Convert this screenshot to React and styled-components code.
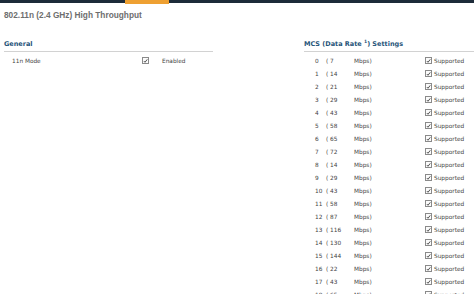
import React from "react";
import styled, { createGlobalStyle } from "styled-components";

const GlobalStyle = createGlobalStyle`
html, body {
  margin: 0;
  padding: 0;
  background: #ffffff;
  overflow: hidden;
}
body {
  font-family: "DejaVu Sans", Verdana, sans-serif;
}
`;

const rates = [7, 14, 21, 29, 43, 58, 65, 72, 14, 29, 43, 58, 87, 116, 130, 144, 22, 43, 65];

const Check = () => (
    <svg width="7" height="7" viewBox="0 0 7 7">
        <path d="M1.2 3.6 L2.8 5.3 L6 1.2" fill="none" stroke="#222" strokeWidth="1.1" />
    </svg>
);

const App = () => {
    return (
        <Page>
            <GlobalStyle />
            <TopBar>
                <Tab />
            </TopBar>
            <Title>802.11n (2.4 GHz) High Throughput</Title>
            <Columns>
                <LeftCol>
                    <Heading>General</Heading>
                    <ModeRow>
                        <ModeLabel>11n Mode</ModeLabel>
                        <Box><Check /></Box>
                        <ModeValue>Enabled</ModeValue>
                    </ModeRow>
                </LeftCol>
                <RightCol>
                    <Heading>
                        MCS (Data Rate <Sup>1</Sup>) Settings
                    </Heading>
                    {rates.map((rate, idx) => {
                        return (
                            <McsRow key={idx}>
                                <Index>{idx}</Index>
                                <Rate>( {rate}</Rate>
                                <Unit>Mbps)</Unit>
                                <Box><Check /></Box>
                                <Supported>Supported</Supported>
                            </McsRow>
                        )
                    })}
                </RightCol>
            </Columns>
        </Page>
    )
}

const Page = styled.div`
width: 474px;
height: 294px;
overflow: hidden;
background: #ffffff;
`;

const TopBar = styled.div`
display: flex;
align-items: flex-start;
height: 3px;
background-color: #1d2b39;
`;

const Tab = styled.div`
margin-left: 125px;
width: 44px;
height: 4px;
background-color: #eea032;
`;

const Title = styled.div`
margin-top: 7px;
padding-left: 4px;
height: 10px;
line-height: 10px;
font-family: "Liberation Sans", Arial, sans-serif;
font-size: 8.3px;
font-weight: bold;
color: #6e6e6e;
`;

const Columns = styled.div`
display: flex;
margin-top: 19px;
`;

const LeftCol = styled.div`
margin-left: 4px;
width: 209px;
`;

const RightCol = styled.div`
margin-left: 91px;
flex: 1;
`;

const Heading = styled.div`
height: 10px;
line-height: 10px;
padding-bottom: 2px;
margin-bottom: 2px;
border-bottom: 1px solid #d2d2d2;
font-size: 6.5px;
font-weight: bold;
color: #1f5479;
white-space: nowrap;
`;

const Sup = styled.sup`
font-size: 4.5px;
line-height: 0;
`;

const Row = styled.div`
display: flex;
align-items: center;
height: 13px;
font-size: 5.8px;
color: #444444;
white-space: nowrap;
`;

const ModeRow = styled(Row)`
padding-left: 8px;
`;

const ModeLabel = styled.div`
width: 130px;
`;

const ModeValue = styled.div`
margin-left: 13px;
`;

const McsRow = styled(Row)`
padding-left: 11px;
`;

const Index = styled.div`
width: 11px;
`;

const Rate = styled.div`
width: 28px;
`;

const Unit = styled.div`
width: 71px;
`;

const Box = styled.span`
display: inline-flex;
align-items: center;
justify-content: center;
box-sizing: border-box;
width: 7px;
height: 7px;
border: 1px solid #8a8a8a;
background: #fbfbfb;
svg {
    display: block;
    width: 6px;
    height: 6px;
}
`;

const Supported = styled.div`
margin-left: 2px;
`;

export default App
